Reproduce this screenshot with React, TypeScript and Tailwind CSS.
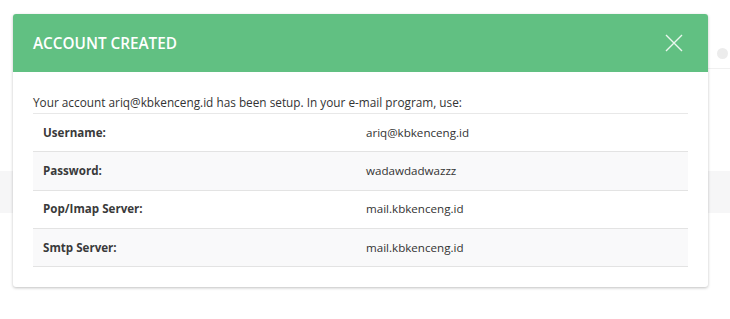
import React from "react";

const rows = [
  { label: "Username:", value: "ariq@kbkenceng.id" },
  { label: "Password:", value: "wadawdadwazzz" },
  { label: "Pop/Imap Server:", value: "mail.kbkenceng.id" },
  { label: "Smtp Server:", value: "mail.kbkenceng.id" },
];

export default function App() {
  return (
    <div
      className="relative w-[730px] h-[319px] overflow-hidden bg-white"
      style={{ fontFamily: '"Open Sans", "Liberation Sans", sans-serif' }}
    >
      {/* faded page behind the modal */}
      <div className="absolute left-0 right-0 top-[171px] h-[42px] bg-[#f6f6f7]" />
      <div className="absolute right-0 top-[68px] w-[30px] h-px bg-[#f0f0f0]" />
      <div className="absolute left-[717px] top-[48px] w-[11px] h-[11px] rounded-full bg-[#ececec]" />

      <div className="relative ml-[13px] mt-[14px] w-[695px] bg-white rounded-[3px] shadow-[0_1px_3px_rgba(0,0,0,0.25)]">
        <div className="flex h-[58px] items-center justify-between rounded-t-[3px] bg-[#61c082] pl-[20px] pr-[25px]">
          <span className="text-[15.3px] font-semibold text-white">ACCOUNT CREATED</span>
          <svg width="18" height="18" viewBox="0 0 18 18" className="mt-[-1px]">
            <path d="M1 1 L17 17 M17 1 L1 17" stroke="#eaf7ee" strokeWidth="1.4" fill="none" />
          </svg>
        </div>
        <div className="px-[20px] pt-[20px] pb-[20px]">
          <div className="text-[11.8px] leading-[20px] text-[#333] border-b border-[#e8e8e8] pb-[1px]">
            Your account ariq@kbkenceng.id has been setup. In your e-mail program, use:
          </div>
          {rows.map((r, i) => (
            <div
              key={r.label}
              className={`flex h-[38.25px] items-center border-b border-[#e3e3e3] ${i % 2 === 1 ? "bg-[#f9f9fa]" : "bg-white"}`}
            >
              <div className="w-[333px] pl-[10px] text-[11.6px] font-bold text-[#3a3a3a]">{r.label}</div>
              <div className="text-[11.6px] text-[#333]">{r.value}</div>
            </div>
          ))}
        </div>
      </div>
    </div>
  );
}
